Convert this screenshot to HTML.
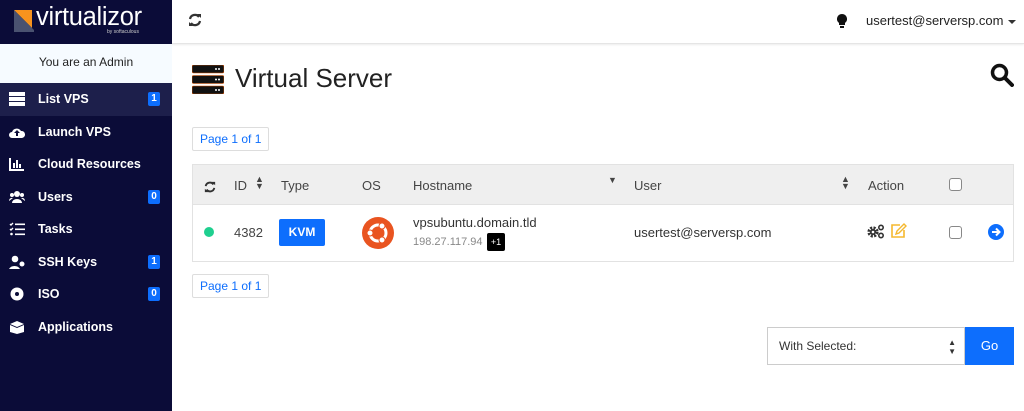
<!DOCTYPE html>
<html><head><style>
*{box-sizing:border-box;margin:0;padding:0}
body{width:1024px;height:411px;overflow:hidden;font-family:"Liberation Sans",sans-serif;background:#fff;position:relative;color:#333}
.sb{position:absolute;left:0;top:0;width:172px;height:411px;background:#0b0c38}
.logo{height:44px;position:relative}
.admin{position:absolute;top:44px;left:0;width:172px;height:39px;background:#f6fbff;color:#222;font-size:12px;text-align:center;line-height:37px}
.menu{position:absolute;top:83px;left:0;width:172px}
.mi{height:32.5px;color:#fff;font-size:12.5px;font-weight:bold;display:flex;align-items:center;padding-left:38px;position:relative}
.mi.act{background:#1d1f4b}
.mi .ic{position:absolute;left:9px;top:9px;width:16px;height:14px}
.bd{position:absolute;left:148px;top:9px;background:#0d6efd;color:#fff;font-size:10px;width:12px;height:14px;border-radius:2px;text-align:center;line-height:14px}
.top{position:absolute;left:172px;top:0;right:0;height:44px;border-bottom:1px solid #e5e5e5;box-shadow:0 1px 2px rgba(0,0,0,.08)}
.pg{position:absolute;left:192px;height:24px;border:1px solid #ddd;color:#0d6efd;font-size:12px;line-height:22px;padding:0 7px;border-radius:2px}
.tbl{position:absolute;left:192px;top:164px;width:822px;height:98px;border:1px solid #e2e2e2}
.th{height:40px;background:#efefef;border-bottom:1px solid #e2e2e2;position:relative;font-size:13px;color:#444}
.th span,.tr span{position:absolute}
.tr{position:relative;height:57px;font-size:13px}
</style></head><body>
<div class="sb">
 <div class="logo">
  <svg style="position:absolute;left:14px;top:10px" width="20" height="22"><polygon points="0,0 18,0 18,18" fill="#f7931e"/><polygon points="0,0 0,22 20,22 20,20" fill="#4a5270"/></svg>
  <div style="position:absolute;left:36px;top:3px;color:#fff;font-size:25.5px;letter-spacing:-0.3px">virtualizor</div>
  <div style="position:absolute;left:107px;top:29px;color:#ccc;font-size:5px">by softaculous</div>
 </div>
 <div class="admin">You are an Admin</div>
 <div class="menu">
  <div class="mi act"><svg class="ic" viewBox="0 0 16 14"><rect y="0" width="16" height="4" fill="#fff"/><rect y="5" width="16" height="4" fill="#fff"/><rect y="10" width="16" height="4" fill="#fff"/></svg>List VPS<div class="bd">1</div></div>
  <div class="mi"><svg class="ic" viewBox="0 0 16 14"><path d="M3 13a3 3 0 0 1 0-6 5 5 0 0 1 9-1 3.5 3.5 0 0 1 1 7z" fill="#fff"/><path d="M8 5l-3 3h2v3h2V8h2z" fill="#0b0c38"/></svg>Launch VPS</div>
  <div class="mi"><svg class="ic" viewBox="0 0 16 14"><path d="M1 1v12h14" stroke="#fff" stroke-width="2" fill="none"/><rect x="4" y="6" width="2" height="5" fill="#fff"/><rect x="7" y="3" width="2" height="8" fill="#fff"/><rect x="10" y="7" width="2" height="4" fill="#fff"/></svg>Cloud Resources</div>
  <div class="mi"><svg class="ic" viewBox="0 0 16 14"><circle cx="8" cy="4" r="3" fill="#fff"/><circle cx="3" cy="5" r="2" fill="#fff"/><circle cx="13" cy="5" r="2" fill="#fff"/><path d="M3 13a5 4 0 0 1 10 0z" fill="#fff"/><path d="M0 11a3 3 0 0 1 4-3M16 11a3 3 0 0 0-4-3" fill="#fff"/></svg>Users<div class="bd">0</div></div>
  <div class="mi"><svg class="ic" viewBox="0 0 16 14"><path d="M1 2l1 1 2-2M1 7l1 1 2-2" stroke="#fff" fill="none" stroke-width="1.4"/><rect x="6" y="1.5" width="10" height="1.6" fill="#fff"/><rect x="6" y="6.5" width="10" height="1.6" fill="#fff"/><rect x="6" y="11.5" width="10" height="1.6" fill="#fff"/><circle cx="2.5" cy="12" r="1.3" fill="#fff"/></svg>Tasks</div>
  <div class="mi"><svg class="ic" viewBox="0 0 16 14"><circle cx="6" cy="4" r="3.3" fill="#fff"/><path d="M0 14a6 5 0 0 1 11 0z" fill="#fff"/><circle cx="13" cy="9" r="2.5" fill="#fff"/></svg>SSH Keys<div class="bd">1</div></div>
  <div class="mi"><svg class="ic" viewBox="0 0 16 14"><circle cx="8" cy="7" r="6.5" fill="#fff"/><circle cx="8" cy="7" r="2" fill="#0b0c38"/></svg>ISO<div class="bd">0</div></div>
  <div class="mi"><svg class="ic" viewBox="0 0 16 14"><path d="M1 4l7-3 7 3-7 3z M1 5l7 3 7-3v7l-7 2-7-2z" fill="#fff"/></svg>Applications</div>
 </div>
</div>
<div class="top">
 <svg style="position:absolute;left:16px;top:13px" width="14" height="14" viewBox="0 0 14 14"><path d="M2 6a5 5 0 0 1 9-2M12 8a5 5 0 0 1-9 2" stroke="#333" stroke-width="2.2" fill="none"/><path d="M9 1h4v4zM5 13H1V9z" fill="#333"/></svg>
 <svg style="position:absolute;left:665px;top:14px" width="10" height="15" viewBox="0 0 10 15"><path d="M5 0a5 5 0 0 1 3 9v2H2V9A5 5 0 0 1 5 0z" fill="#111"/><rect x="3" y="12" width="4" height="2" fill="#111"/></svg>
 <div style="position:absolute;left:694px;top:13px;font-size:13px;color:#222">usertest@serversp.com</div>
 <div style="position:absolute;left:836px;top:20px;border:4px solid transparent;border-top-color:#333"></div>
</div>
<svg style="position:absolute;left:192px;top:65px" width="32" height="29" viewBox="0 0 32 29"><rect y="0" width="32" height="8" rx="1.5" fill="#111" stroke="#e85d0a" stroke-width=".6"/><rect y="10.5" width="32" height="8" rx="1.5" fill="#111" stroke="#e85d0a" stroke-width=".6"/><rect y="21" width="32" height="8" rx="1.5" fill="#111" stroke="#e85d0a" stroke-width=".6"/><g fill="#fff"><circle cx="24" cy="4" r="1"/><circle cx="27" cy="4" r="1"/><circle cx="24" cy="14.5" r="1"/><circle cx="27" cy="14.5" r="1"/><circle cx="24" cy="25" r="1"/><circle cx="27" cy="25" r="1"/></g></svg>
<div style="position:absolute;left:235px;top:63px;font-size:26px;color:#222">Virtual Server</div>
<svg style="position:absolute;left:990px;top:63px" width="24" height="24" viewBox="0 0 24 24"><circle cx="9.5" cy="9.5" r="7" stroke="#111" stroke-width="3.5" fill="none"/><path d="M15 15l7 7" stroke="#111" stroke-width="4" stroke-linecap="round"/></svg>
<div class="pg" style="top:127px">Page 1 of 1</div>
<div class="tbl">
 <div class="th">
  <svg style="position:absolute;left:11px;top:16px" width="12" height="12" viewBox="0 0 14 14"><path d="M2 6a5 5 0 0 1 9-2M12 8a5 5 0 0 1-9 2" stroke="#333" stroke-width="2.2" fill="none"/><path d="M9 1h4v4zM5 13H1V9z" fill="#333"/></svg>
  <span style="left:41px;top:13px">ID</span><span style="left:62px;top:11px;font-size:9px;line-height:7px">▲<br>▼</span>
  <span style="left:88px;top:13px">Type</span><span style="left:169px;top:13px">OS</span>
  <span style="left:220px;top:13px">Hostname</span><span style="left:415px;top:10px;font-size:9px">▼</span>
  <span style="left:441px;top:13px">User</span><span style="left:648px;top:11px;font-size:9px;line-height:7px">▲<br>▼</span>
  <span style="left:675px;top:13px">Action</span>
  <span style="left:756px;top:13px;width:13px;height:13px;border:1px solid #888;border-radius:3px;background:#fff"></span>
 </div>
 <div class="tr">
  <span style="left:11px;top:22px;width:10px;height:10px;border-radius:50%;background:#1fcf8f"></span>
  <span style="left:41px;top:20px;color:#444">4382</span>
  <span style="left:86px;top:14px;width:46px;height:27px;background:#0d6efd;color:#fff;font-weight:bold;font-size:12px;text-align:center;line-height:27px;border-radius:2px">KVM</span>
  <svg style="position:absolute;left:169px;top:12px" width="32" height="32" viewBox="0 0 32 32"><circle cx="16" cy="16" r="16" fill="#e95420"/><circle cx="16" cy="16" r="8" stroke="#fff" stroke-width="3" fill="none"/><circle cx="8" cy="16" r="3" fill="#fff" stroke="#e95420"/><circle cx="20" cy="9" r="3" fill="#fff" stroke="#e95420"/><circle cx="20" cy="23" r="3" fill="#fff" stroke="#e95420"/></svg>
  <span style="left:220px;top:10px;font-size:13px;color:#333">vpsubuntu.domain.tld</span>
  <span style="left:220px;top:31px;font-size:11px;color:#888">198.27.117.94</span>
  <span style="left:294px;top:28px;width:18px;height:18px;background:#000;color:#fff;font-size:9px;text-align:center;line-height:18px;border-radius:2px">+1</span>
  <span style="left:441px;top:20px;color:#333">usertest@serversp.com</span>
  <svg style="position:absolute;left:674px;top:19px" width="18" height="15" viewBox="0 0 18 15"><circle cx="6" cy="8" r="4" fill="none" stroke="#333" stroke-width="3.2" stroke-dasharray="2 1.2"/><circle cx="6" cy="8" r="3" fill="#333"/><circle cx="6" cy="8" r="1.3" fill="#fff"/><circle cx="14" cy="3.5" r="2.2" fill="none" stroke="#333" stroke-width="1.6"/><circle cx="14" cy="11.5" r="2.2" fill="none" stroke="#333" stroke-width="1.6"/></svg>
  <svg style="position:absolute;left:698px;top:18px" width="16" height="15" viewBox="0 0 16 15"><path d="M9 2H1v12h12V7" stroke="#f5b82e" stroke-width="1.6" fill="none"/><path d="M13 1l2 2-7 7-3 1 1-3z" stroke="#f5b82e" stroke-width="1.4" fill="none"/></svg>
  <span style="left:756px;top:21px;width:13px;height:13px;border:1px solid #888;border-radius:3px"></span>
  <svg style="position:absolute;left:795px;top:19px" width="16" height="16" viewBox="0 0 16 16"><circle cx="8" cy="8" r="8" fill="#0d6efd"/><path d="M4 8h7M8 4.5L11.5 8 8 11.5" stroke="#fff" stroke-width="2" fill="none"/></svg>
 </div>
</div>
<div class="pg" style="top:274px">Page 1 of 1</div>
<div style="position:absolute;left:767px;top:327px;width:198px;height:38px;border:1px solid #ccc;font-size:12px;color:#333;line-height:36px;padding-left:11px">With Selected:<span style="position:absolute;right:8px;top:0;font-size:8px;line-height:9px;padding-top:10px">▲<br>▼</span></div>
<div style="position:absolute;left:965px;top:327px;width:49px;height:38px;background:#0d6efd;color:#fff;font-size:13px;text-align:center;line-height:38px">Go</div>
</body></html>
